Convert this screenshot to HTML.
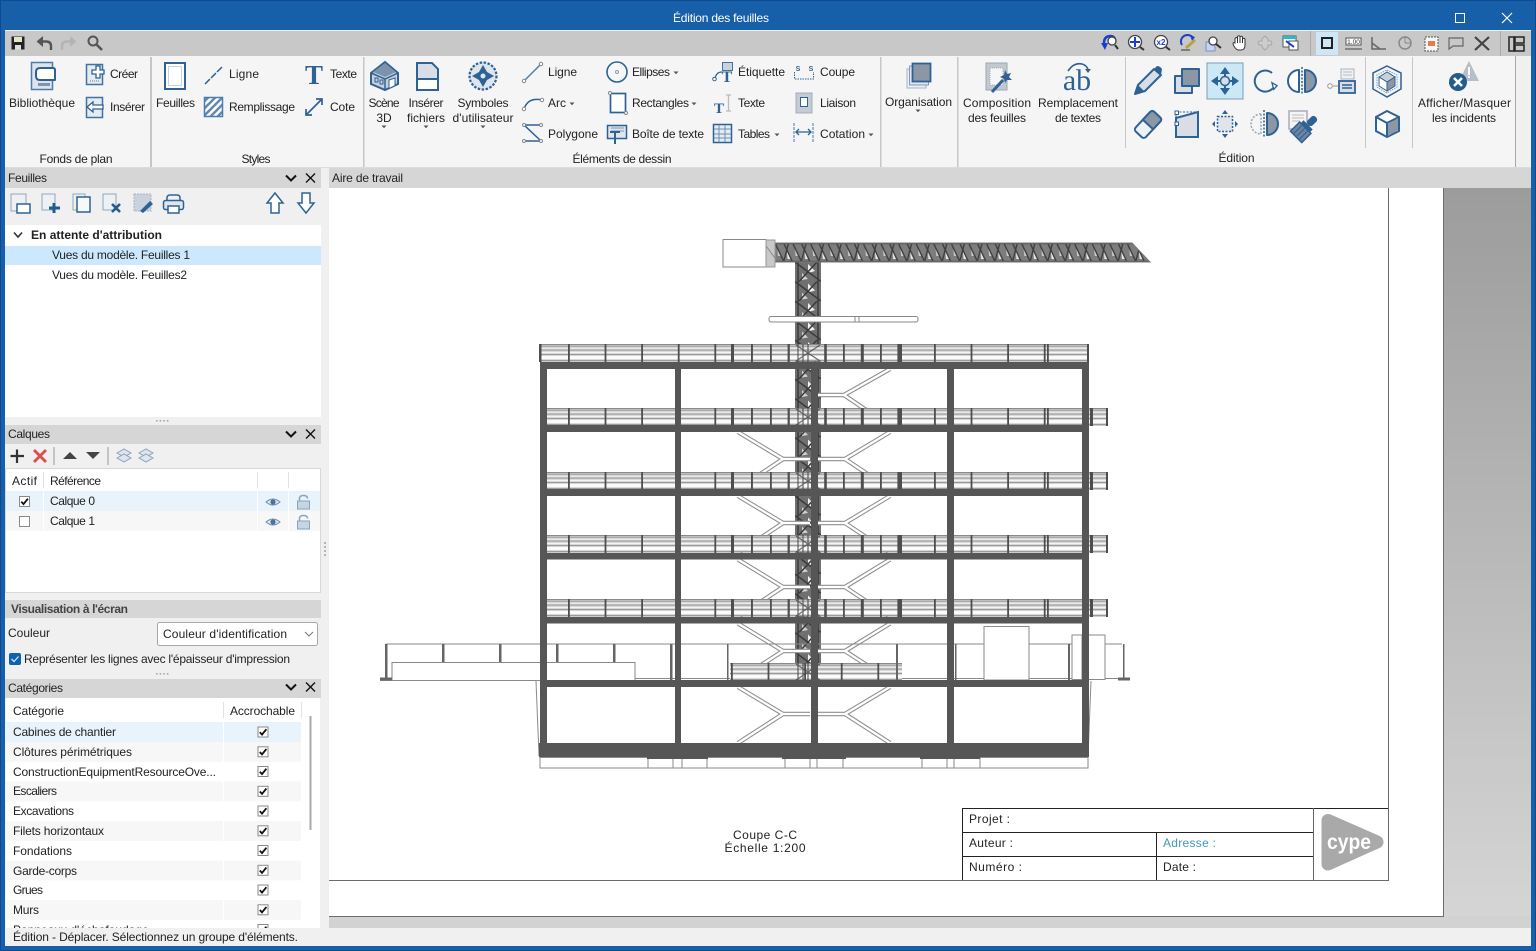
<!DOCTYPE html>
<html lang="fr"><head><meta charset="utf-8"><title>Édition des feuilles</title>
<style>
html,body{margin:0;padding:0;width:1536px;height:951px;overflow:hidden;background:#175fa9}
body>svg{position:absolute;left:0;top:0;display:block;filter:blur(.25px)}
text{font-family:"Liberation Sans",sans-serif;font-size:12px;fill:#222}
.m{text-anchor:middle}
.b{font-weight:bold}
.f{fill:#d9dee6;stroke:#2f6294;stroke-width:2;stroke-linejoin:round}
.g{fill:#8c97a6;stroke:#2f6294;stroke-width:2;stroke-linejoin:round}
.w{fill:#fff;stroke:#2f6294;stroke-width:2;stroke-linejoin:round}
</style></head><body>
<svg width="1536" height="951" viewBox="0 0 1536 951" xmlns="http://www.w3.org/2000/svg">
<defs>
<linearGradient id="bg" x1="0" y1="0" x2="0" y2="1"><stop offset="0" stop-color="#9c9c9c"/><stop offset="1" stop-color="#d6d6d6"/></linearGradient>
<pattern id="hatch" patternUnits="userSpaceOnUse" width="5" height="5" patternTransform="rotate(-45)"><rect width="5" height="5" fill="#fff"/><rect width="5" height="2.4" fill="#5d86ad"/></pattern>
<pattern id="tw" patternUnits="userSpaceOnUse" x="795" y="262" width="26" height="19.5">
<rect width="26" height="19.5" fill="#707070"/>
<path d="M13 2L20 9L13 11Z" fill="#f2f2f2"/><path d="M7 11L13 17L7 18Z" fill="#d0d0d0"/>
<path d="M0 0L26 19.5M22 0L4 19.5M3 0V19.5M23 0V19.5" stroke="#3a3a3a" stroke-width="1.500" fill="none"/>
</pattern>
<pattern id="jb" patternUnits="userSpaceOnUse" x="766" y="243" width="17.6" height="19">
<rect width="17.600" height="19" fill="#7d7d7d"/>
<path d="M3 5L8 16H4Z" fill="#e8e8e8"/><path d="M11 4L15 13H12Z" fill="#cfcfcf"/>
<path d="M0 0L9 19M9 0L18 19M0 19L5 0" stroke="#3d3d3d" stroke-width="1.400" fill="none"/>
<path d="M0 .6H18M0 18.400H18" stroke="#555" stroke-width="1.200"/>
</pattern>
<g id="cb"><rect x="-5" y="-5" width="10" height="10" fill="#fff" stroke="#8a8a8a" stroke-width="1"/><path d="M-3.2 0.2L-1 2.6L3.4-2.8" fill="none" stroke="#111" stroke-width="1.8"/></g>
<g id="chx"><path d="M-5-2.5L0 2.5L5-2.5" fill="none" stroke="#111" stroke-width="2"/><path d="M15-4.5L24 4.5M24-4.5L15 4.5" fill="none" stroke="#111" stroke-width="1.4"/></g>
<g id="arr"><path d="M-2.5-1.5H2.5L0 1.2Z" fill="#555"/></g>
<g id="grip"><rect x="0" y="0" width="1.6" height="1.6" fill="#aaa"/><rect x="3.6" y="0" width="1.6" height="1.6" fill="#aaa"/><rect x="7.2" y="0" width="1.6" height="1.6" fill="#aaa"/><rect x="10.8" y="0" width="1.6" height="1.6" fill="#aaa"/></g>
<g id="railing">
<rect x="0" y="0" width="568" height="17.500" fill="#d4d4d4"/>
<rect x="0" y="0" width="568" height="1.300" fill="#8a8a8a"/>
<rect x="0" y="2.200" width="568" height="1" fill="#a0a0a0"/>
<rect x="0" y="3.500" width="568" height="1.100" fill="#f4f4f4"/>
<rect x="0" y="5.600" width="568" height="1" fill="#9a9a9a"/>
<rect x="0" y="7.800" width="568" height="1.300" fill="#f4f4f4"/>
<rect x="0" y="10" width="568" height="1" fill="#9a9a9a"/>
<rect x="0" y="12" width="568" height="3.400" fill="#fafafa"/>
<rect x="0" y="15.800" width="568" height="1.700" fill="#9a9a9a"/>
</g>
<g id="posts" fill="#4e4e4e">
<rect x="0" width="1.800" height="18"/><rect x="36.6" width="1.800" height="18"/><rect x="73.2" width="1.800" height="18"/><rect x="109.8" width="1.800" height="18"/><rect x="146.4" width="1.800" height="18"/><rect x="183" width="1.800" height="18"/><rect x="219.6" width="1.800" height="18"/><rect x="256.2" width="1.800" height="18"/><rect x="292.8" width="1.800" height="18"/><rect x="329.4" width="1.800" height="18"/><rect x="366" width="1.800" height="18"/><rect x="402.6" width="1.800" height="18"/><rect x="439.2" width="1.800" height="18"/><rect x="475.8" width="1.800" height="18"/>
</g>
<g id="dense" fill="#4e4e4e"><rect x="731" width="3" height="18"/><rect x="751" width="1.800" height="18"/><rect x="770" width="1.800" height="18"/><rect x="788" width="1.800" height="18"/><rect x="825" width="1.800" height="18"/><rect x="843" width="1.800" height="18"/><rect x="862" width="1.800" height="18"/><rect x="880" width="1.800" height="18"/><rect x="899" width="3" height="18"/><path d="M796 1L820 17M820 1L796 17M798 0V18M803 0V18M808 0V18" stroke="#3f3f3f" stroke-width="1.300" fill="none" opacity=".75"/></g>
<g id="eye"><path d="M-7 0Q0-6 7 0Q0 6-7 0Z" fill="#dbe4ee" stroke="#6f8eae" stroke-width="1"/><circle r="2.6" fill="#4c7299"/></g>
<g id="lock"><rect x="-6" y="-2" width="12" height="8" fill="#c6d4e3" stroke="#8aa4bf"/><path d="M-4-2V-4.500Q-4-7.500 0-7.500Q4-7.500 4-4.500" fill="none" stroke="#8aa4bf" stroke-width="1.5"/></g>
<clipPath id="catclip"><rect x="6" y="698" width="314" height="230"/></clipPath>
</defs>

<!-- window frame -->
<rect width="1536" height="951" fill="#175fa9"/>
<rect x=".5" y=".5" width="1535" height="950" fill="none" stroke="#0e4a90"/>
<text x="721" y="22" class="m" style="fill:#fff" textLength="96">Édition des feuilles</text>
<rect x="1455.5" y="13.5" width="9" height="9" fill="none" stroke="#fff" stroke-width="1"/>
<path d="M1502 13L1512 23M1512 13L1502 23" stroke="#fff" stroke-width="1.2"/>

<!-- bars -->
<rect x="5" y="30" width="1526" height="916" fill="#f0f0f0"/>
<rect x="5" y="31" width="1526" height="25" fill="#c8c8c8"/>
<rect x="5" y="56" width="1510" height="111" fill="#f5f5f5"/>
<rect x="1515" y="56" width="1" height="111" fill="#a8a8a8"/>
<rect x="5" y="167" width="1526" height="1" fill="#dcdcdc"/>
<g fill="#c6c6c6"><rect x="150" y="57" width="2" height="110"/><rect x="363" y="57" width="1.5" height="110"/><rect x="880" y="57" width="1.5" height="110"/><rect x="957" y="57" width="1.5" height="110"/><rect x="1125" y="57" width="1" height="91"/><rect x="1365" y="57" width="1" height="91"/><rect x="1412" y="57" width="1" height="91"/></g>

<!-- QAT left -->
<rect x="11.500" y="36.500" width="13" height="13" fill="#222"/><rect x="14" y="37" width="8" height="5" fill="#e4e4c8"/><rect x="15" y="45" width="6" height="4.500" fill="#ddd"/>
<path d="M36.500 41.500L43 36V47Z" fill="#555"/><path d="M42 41.500H46Q51 41.500 51 46V50" fill="none" stroke="#555" stroke-width="2.400"/>
<path d="M76.500 41.500L70 36V47Z" fill="#b4b4b4"/><path d="M71 41.500H67Q62 41.500 62 46V50" fill="none" stroke="#b4b4b4" stroke-width="2.400"/>
<circle cx="93" cy="41" r="4.500" fill="none" stroke="#555" stroke-width="2"/><path d="M96 44L102 50" stroke="#555" stroke-width="2.500"/>

<!-- QAT right -->
<path d="M1104 43Q1104 36 1111 36Q1116 37 1115 43" fill="none" stroke="#1c3fc8" stroke-width="2.500"/><path d="M1101 43H1108L1105 50Z" fill="#1c3fc8"/><circle cx="1112" cy="41" r="4" fill="#fff" stroke="#444" stroke-width="1.300"/><path d="M1115 45L1118 49" stroke="#333" stroke-width="2"/>
<g><circle cx="1135" cy="42" r="6.500" fill="#fff" stroke="#444" stroke-width="1.300"/><path d="M1135 37V47M1130 42H1140" stroke="#1c3fc8" stroke-width="2"/><path d="M1140 47L1144 50" stroke="#333" stroke-width="2"/></g>
<g><circle cx="1161" cy="42" r="6.500" fill="#fff" stroke="#444" stroke-width="1.300"/><text x="1161" y="45" class="m" style="font-size:8px;fill:#1c3fc8;font-weight:bold">x2</text><path d="M1166 47L1170 50" stroke="#333" stroke-width="2"/></g>
<g><path d="M1182 45A6 6 0 1 1 1193 38" fill="none" stroke="#1c3fc8" stroke-width="2"/><path d="M1190 35L1195 37L1192 41Z" fill="#1c3fc8"/><path d="M1186 48L1195 40" stroke="#b8a33c" stroke-width="3"/><path d="M1181 50H1190" stroke="#333"/></g>
<g><rect x="1206" y="42" width="9" height="9" fill="#c9d2ee" stroke="#7b8fd0"/><circle cx="1213" cy="41" r="4" fill="#fff" stroke="#444" stroke-width="1.300"/><path d="M1216 44L1221 48" stroke="#333" stroke-width="2"/></g>
<path d="M1235 43V38.500Q1236.500 36.500 1237.500 38.500V43V36.500Q1239 35 1240 36.500V43V37Q1241.500 35.500 1242.500 37V43V39Q1244 37.500 1245 39V45Q1245 50 1241 50H1238Q1235 49 1233 44Q1233 42 1235 43Z" fill="#fff" stroke="#333" stroke-width="1"/>
<path d="M1265 36L1268 39V41H1271L1272 43L1271 45H1268V47L1265 50L1262 47V45H1259L1258 43L1259 41H1262V39Z" fill="#cdcdcd" stroke="#a8a8a8"/>
<g><rect x="1283" y="36" width="13" height="11" fill="#fff" stroke="#555"/><rect x="1283" y="36" width="13" height="3" fill="#2bb8c8"/><rect x="1289" y="41" width="9" height="9" fill="#fff" stroke="#555"/><path d="M1286 41L1294 47" stroke="#1c3fc8" stroke-width="2"/></g>
<rect x="1310" y="31" width="1" height="25" fill="#aaa"/>
<rect x="1316" y="32" width="22" height="23" fill="#cfe6f6"/>
<rect x="1322" y="38" width="10" height="10" fill="none" stroke="#222" stroke-width="2"/>
<g><rect x="1346" y="38" width="15" height="7" fill="#fff" stroke="#555"/><text x="1353.500" y="44" class="m" style="font-size:6.500px;fill:#333">1.00</text><path d="M1345 49H1362" stroke="#444"/></g>
<path d="M1372 37V49H1386M1372 43L1380 49" fill="none" stroke="#666" stroke-width="1.500"/>
<g><circle cx="1405" cy="43" r="6" fill="none" stroke="#888" stroke-width="1.500"/><path d="M1405 43H1411M1405 43V37" stroke="#888"/></g>
<g><rect x="1425" y="37" width="13" height="14" fill="#f5f5f5" stroke="#555" stroke-dasharray="2 1"/><rect x="1428" y="41" width="7" height="5" fill="#e67a4a"/></g>
<path d="M1449 38H1463V46H1453L1449 49Z" fill="none" stroke="#666" stroke-width="1.200"/>
<path d="M1475 37L1489 50M1489 37L1475 50" stroke="#444" stroke-width="2.200"/>
<rect x="1500" y="31" width="1" height="25" fill="#aaa"/>
<g fill="none" stroke="#222" stroke-width="1.500"><rect x="1509" y="37" width="5" height="14"/><rect x="1515" y="37" width="9" height="6"/><rect x="1515" y="45" width="9" height="6"/></g>

<!-- ribbon labels -->
<g>
<text x="9" y="107" textLength="66">Bibliothèque</text>
<text x="110" y="78" textLength="28">Créer</text>
<text x="110" y="111" textLength="35">Insérer</text>
<text x="76" y="163" class="m" textLength="73">Fonds de plan</text>
<text x="156" y="107" textLength="39">Feuilles</text>
<text x="229" y="78" textLength="30">Ligne</text>
<text x="229" y="111" textLength="66">Remplissage</text>
<text x="330" y="78" textLength="27">Texte</text>
<text x="330" y="111" textLength="25">Cote</text>
<text x="256" y="163" class="m" textLength="29">Styles</text>
<text x="384" y="107" class="m" textLength="31">Scène</text><text x="384" y="122" class="m">3D</text>
<text x="426" y="107" class="m" textLength="35">Insérer</text><text x="426" y="122" class="m" textLength="38">fichiers</text>
<text x="483" y="107" class="m" textLength="51">Symboles</text><text x="483" y="122" class="m" textLength="61">d'utilisateur</text>
<text x="548" y="76" textLength="29">Ligne</text>
<text x="548" y="107" textLength="18">Arc</text>
<text x="548" y="138" textLength="50">Polygone</text>
<text x="632" y="76" textLength="38">Ellipses</text>
<text x="632" y="107" textLength="57">Rectangles</text>
<text x="632" y="138" textLength="72">Boîte de texte</text>
<text x="738" y="76" textLength="47">Étiquette</text>
<text x="738" y="107" textLength="27">Texte</text>
<text x="738" y="138" textLength="32">Tables</text>
<text x="820" y="76" textLength="35">Coupe</text>
<text x="820" y="107" textLength="36">Liaison</text>
<text x="820" y="138" textLength="45">Cotation</text>
<text x="622" y="163" class="m" textLength="99">Éléments de dessin</text>
<text x="918.500" y="106" class="m" textLength="67">Organisation</text>
<text x="997" y="107" class="m" textLength="68">Composition</text><text x="997" y="122" class="m" textLength="58">des feuilles</text>
<text x="1078" y="107" class="m" textLength="80">Remplacement</text><text x="1078" y="122" class="m" textLength="46">de textes</text>
<text x="1236.500" y="162" class="m" textLength="36">Édition</text>
<text x="1464.500" y="107" class="m" textLength="93">Afficher/Masquer</text><text x="1464" y="122" class="m" textLength="64">les incidents</text>
</g>
<use href="#arr" x="384" y="127"/><use href="#arr" x="426" y="127"/><use href="#arr" x="483" y="127"/><use href="#arr" x="918" y="111"/>
<use href="#arr" x="676" y="73"/><use href="#arr" x="572" y="104"/><use href="#arr" x="694" y="104"/><use href="#arr" x="777" y="135"/><use href="#arr" x="871" y="135"/>

<!-- ribbon icons -->
<rect x="31.500" y="62.500" width="21" height="27" fill="#dfe4ea" stroke="#4a7db0" stroke-width="1.500"/>
<path d="M36 72Q36 68 40 68H53Q55 68 55 70V80H40Q36 80 36 76Z" class="w"/>
<rect x="38" y="83" width="12" height="3" fill="#7d96b0"/>
<g><rect x="86.500" y="64.500" width="16" height="20" fill="#e6ebf0" stroke="#3f73a6" stroke-width="1.500"/><path d="M96 66H100V70H104V74H100V78H96V74H92V70H96Z" fill="#fff" stroke="#2f6294" stroke-width="1.300"/><path d="M90 81H99" stroke="#777" stroke-dasharray="1 1"/></g>
<g><rect x="86.500" y="97.500" width="16" height="20" fill="#e6ebf0" stroke="#3f73a6" stroke-width="1.500"/><path d="M93 102V105H103V109H93V112L87 107Z" fill="#fff" stroke="#2f6294" stroke-width="1.300"/></g>
<rect x="165" y="63" width="20" height="26" fill="#fff" stroke="#2f6294" stroke-width="2"/><rect x="168.500" y="66.500" width="13" height="19" fill="none" stroke="#8ca6c0" stroke-dasharray="1 1"/>
<path d="M205 84L223 66" stroke="#2f6294" stroke-width="1.500" stroke-dasharray="7 1.500"/>
<rect x="204.500" y="97.500" width="18" height="19" fill="url(#hatch)" stroke="#4a7db0" stroke-width="1.500"/>
<text x="314" y="84" class="m" style="font-family:'Liberation Serif',serif;font-weight:bold;font-size:27px;fill:#2f6294">T</text>
<path d="M306 115L322 99M306 109V115H312M316 99H322V105" fill="none" stroke="#2f6294" stroke-width="1.700"/>

<path d="M371 73L385 62L398 73V84L385 90L371 84Z" fill="#c7d0db" stroke="#2f6294" stroke-width="2"/>
<path d="M371 73L385 79L398 73M385 79V90" fill="none" stroke="#2f6294" stroke-width="1.500"/><path d="M373 72L385 63L396 72L385 77Z" fill="#7d93ab"/><rect x="375" y="78" width="3" height="4" fill="none" stroke="#2f6294"/><rect x="380" y="80" width="3" height="4" fill="none" stroke="#2f6294"/><path d="M389 88V80L395 78V85" fill="#fff" stroke="#2f6294"/>
<path d="M417 63H432L438 69V90H417Z" fill="#d9dee6" stroke="#2f6294" stroke-width="2"/><rect x="417" y="79" width="21" height="11" fill="#fff" stroke="#2f6294" stroke-width="2"/>
<circle cx="483" cy="76" r="13.500" fill="#dfe5ec" stroke="#2f6294" stroke-width="2.200" stroke-dasharray="2.500 1.500"/><path d="M483 65L487 72L494 76L487 80L483 87L479 80L472 76L479 72Z" fill="#2f6294"/><circle cx="483" cy="76" r="2.500" fill="#dfe5ec"/>

<path d="M524 81L541 64" stroke="#4f7ea8" stroke-width="1.500"/><circle cx="524" cy="81" r="1.700" fill="#fff" stroke="#888"/><circle cx="541" cy="64" r="1.700" fill="#fff" stroke="#888"/>
<path d="M524 109Q528 97 542 100" fill="none" stroke="#2f6294" stroke-width="1.500"/><circle cx="524" cy="109" r="1.700" fill="#fff" stroke="#888"/><circle cx="542" cy="100" r="1.700" fill="#fff" stroke="#888"/>
<path d="M524 125H541M524 125L541 141H524" fill="none" stroke="#2f6294" stroke-width="1.500"/><g fill="#fff" stroke="#888"><circle cx="524" cy="125" r="1.500"/><circle cx="541" cy="125" r="1.500"/><circle cx="524" cy="141" r="1.500"/><circle cx="541" cy="141" r="1.500"/></g>
<circle cx="617" cy="72" r="10" fill="#f4f6f8" stroke="#2f6294" stroke-width="1.600"/><circle cx="617" cy="72" r="1.500" fill="none" stroke="#999"/>
<rect x="610.500" y="93.500" width="15" height="19" fill="#fff" stroke="#2f6294" stroke-width="1.700"/><circle cx="610" cy="93" r="1.500" fill="#fff" stroke="#888"/><circle cx="626" cy="113" r="1.500" fill="#fff" stroke="#888"/>
<rect x="607.500" y="125.500" width="19" height="13" fill="#dfe5ec" stroke="#2f6294" stroke-width="1.500"/><path d="M611 128H624M611 131H624" stroke="#7d96b0"/><path d="M610 132H620M615 132V144" stroke="#2f6294" stroke-width="2"/>
<rect x="722.500" y="62.500" width="10" height="8" fill="#c9d3de" stroke="#3f73a6"/><text x="727" y="82" class="m b" style="font-family:'Liberation Serif',serif;font-size:16px;fill:#2f6294">T</text><path d="M715 79Q716 72 722 72" fill="none" stroke="#2f6294" stroke-width="1.200"/><circle cx="714.500" cy="79" r="1.800" fill="#fff" stroke="#2f6294"/>
<text x="719" y="113" class="m b" style="font-family:'Liberation Serif',serif;font-size:15px;fill:#2f6294">T</text><path d="M726 95H731M728.500 95V111M726 111H731" stroke="#bbb" stroke-width="1.300" fill="none"/>
<rect x="713.500" y="124.500" width="18" height="18" fill="#e6ebf0" stroke="#2f6294" stroke-width="1.500"/><path d="M714 129H731M714 134H731M714 138H731M719 125V142M725 125V142" stroke="#6e90b2"/>
<text x="798" y="71" class="m" style="font-size:7px;fill:#2f6294;font-weight:bold">S</text><text x="811" y="71" class="m" style="font-size:7px;fill:#2f6294;font-weight:bold">S</text><path d="M794.500 72V79H813.500V72" fill="none" stroke="#2f6294" stroke-dasharray="1.500 1"/>
<rect x="796" y="93" width="16" height="20" fill="#c3cbd4" stroke="#aab"/><rect x="800.500" y="97.500" width="7" height="9" fill="#fff" stroke="#2f6294"/>
<path d="M794 123V142M813 123V142" stroke="#4a7db0" stroke-dasharray="3 1"/><path d="M796 132H811M799 129L796 132L799 135M808 129L811 132L808 135" fill="none" stroke="#2f6294" stroke-width="1.300"/>

<g><rect x="907" y="69" width="19" height="19" fill="#eef1f4" stroke="#9eb5cb"/><rect x="909.500" y="66" width="19" height="19" fill="#dfe5ec" stroke="#7e9cba"/><rect x="912.500" y="63.500" width="18" height="18" fill="#8c97a6" stroke="#2f6294" stroke-width="1.800"/></g>
<g><rect x="986" y="63" width="21" height="27" fill="#c2c8cf" stroke="#9ca6b1"/><rect x="990" y="68" width="13" height="17" fill="#f5f6f8" stroke="#aaa" stroke-dasharray="1 1"/><path d="M992 92L1003 80" stroke="#2f6294" stroke-width="3"/><path d="M1005 70L1007 74L1011 73L1009 77L1012 80L1007 80L1005 83L1004 79L1000 77L1004 75Z" fill="#2f6294"/></g>
<text x="1077" y="90" class="m" style="font-family:'Liberation Serif',serif;font-size:30px;fill:#2f6294">ab</text>
<path d="M1068 71Q1074 62 1082 64Q1086 65 1088 69" fill="none" stroke="#2f6294" stroke-width="1.600"/><path d="M1085 69H1091L1088 73Z" fill="#2f6294"/>

<!-- edition grid -->
<path d="M1135 94L1138 85L1154 69L1161 75L1145 91Z" fill="#d9dee6" stroke="#2f6294" stroke-width="2" stroke-linejoin="round"/><path d="M1154 69L1157 66Q1160 66 1162 69L1161 75Z" fill="#2f6294"/><path d="M1135 94L1138 85L1144 91Z" fill="#2f6294"/>
<rect x="1175" y="76" width="17" height="17" class="f"/><rect x="1182" y="69" width="17" height="17" class="g"/>
<rect x="1207" y="63" width="36" height="36" fill="#cbe8f6" stroke="#8fa9be" stroke-width="1.200"/>
<g fill="#2f6294"><path d="M1225 67L1230 74H1220Z"/><path d="M1225 95L1230 88H1220Z"/><path d="M1211 81L1218 76V86Z"/><path d="M1239 81L1232 76V86Z"/><rect x="1224" y="72" width="2" height="18"/><rect x="1216" y="80" width="18" height="2"/></g><circle cx="1225" cy="81" r="4.500" fill="#d9dee6" stroke="#2f6294" stroke-width="1.500"/>
<path d="M1275 85A10.500 10.500 0 1 1 1272 73" fill="none" stroke="#2f6294" stroke-width="2"/><path d="M1271 84H1277L1276 89Z" fill="#fff" stroke="#2f6294" stroke-width="1.300" transform="rotate(30 1274 85)"/>
<path d="M1299 70A11 11 0 0 0 1299 92Z" class="w"/><path d="M1305 70A11 11 0 0 1 1305 92Z" class="g"/><path d="M1302 67V95" stroke="#2f6294" stroke-width="1.500" stroke-dasharray="2 1.500"/>
<rect x="1341" y="69" width="13" height="10" fill="#eef1f4" stroke="#aab5c0"/><path d="M1343 72H1352M1343 75H1352" stroke="#bbb"/><rect x="1339" y="81" width="16" height="12" fill="#d9dee6" stroke="#2f6294" stroke-width="1.800"/><path d="M1342 85H1352M1342 88H1352" stroke="#2f6294" stroke-width="1.400"/><circle cx="1330" cy="86" r="2.300" fill="#fff" stroke="#999"/><path d="M1333 86H1338" stroke="#999"/>
<g transform="rotate(-47 1148 124.500)"><rect x="1134.500" y="117.500" width="27" height="14" rx="3" fill="#eef1f4" stroke="#2f6294" stroke-width="2"/><path d="M1148 117.500H1158.500Q1161.500 117.500 1161.500 120.500V128.500Q1161.500 131.500 1158.500 131.500H1148Z" class="g"/></g>
<path d="M1176 118L1198 112V137H1176Z" fill="#d9dee6" stroke="#2f6294" stroke-width="2"/><path d="M1176 112H1197" stroke="#2f6294" stroke-dasharray="2 1.500"/><path d="M1176 112V120" stroke="#2f6294" stroke-dasharray="2 1"/><rect x="1175" y="111" width="3.500" height="3.500" fill="#fff" stroke="#2f6294"/><rect x="1175" y="122" width="3.500" height="3.500" fill="#fff" stroke="#2f6294"/>
<rect x="1217.500" y="116.500" width="15" height="15" fill="#dfe5ec" stroke="#2f6294" stroke-width="1.500" stroke-dasharray="2 1.500"/><g fill="#2f6294"><path d="M1225 110L1228 114H1222Z"/><path d="M1225 138L1228 134H1222Z"/><path d="M1212 124L1215 121V127Z"/><path d="M1238 124L1235 121V127Z"/></g>
<path d="M1261 114A10 10 0 0 0 1261 134Z" fill="none" stroke="#9aa5b1" stroke-width="1.500" stroke-dasharray="2 1.500"/><path d="M1267 113A11 11 0 0 1 1267 135Z" class="g"/><path d="M1264 110V138" stroke="#2f6294" stroke-width="1.500" stroke-dasharray="2 1.500"/>
<rect x="1289" y="111" width="18" height="18" fill="#f4f4f4" stroke="#aab" stroke-width="1.500"/><path d="M1292 115H1304M1292 118H1304M1292 121H1300" stroke="#bbb"/>
<g transform="translate(1306 127) rotate(-45)"><rect x="-14" y="-8" width="13" height="16" fill="#6d84a0" stroke="#2f6294" stroke-width="1.500"/><path d="M-13-4H-2M-13 0H-2M-13 4H-2" stroke="#2f6294"/><rect x="-1" y="-6.500" width="4" height="13" fill="#2f6294"/><rect x="3" y="-3.500" width="11" height="7" rx="3" fill="#2f6294"/></g>
<path d="M1387 66L1401 73V89L1387 97L1373 89V73Z" fill="none" stroke="#2f6294" stroke-width="1.500"/><path d="M1387 70L1397 75V87L1387 93L1377 87V75Z" fill="#fff" stroke="#7d9ab8" stroke-dasharray="1.500 1"/><path d="M1379 77L1387 72L1395 77L1387 82Z" fill="#c9d0d9" stroke="#2f6294"/><path d="M1379 77V86L1387 91V82Z" fill="#fff" stroke="#2f6294"/><path d="M1395 77V86L1387 91V82Z" fill="#8c97a6" stroke="#2f6294"/>
<path d="M1387 111L1399 117V131L1387 137L1376 131V117Z" fill="#fff" stroke="#2f6294" stroke-width="2"/><path d="M1376 117L1387 123L1399 117M1387 123V137" fill="none" stroke="#2f6294" stroke-width="2"/><path d="M1388 124L1398 118V130L1388 136Z" fill="#8c97a6"/>
<path d="M1469 61L1479 81H1459Z" fill="#b6bec8"/><rect x="1468" y="67" width="2" height="8" fill="#fff"/><rect x="1468" y="76" width="2" height="2" fill="#fff"/>
<circle cx="1458" cy="82" r="9" fill="#245a90"/><path d="M1454 78L1462 86M1462 78L1454 86" stroke="#fff" stroke-width="2.600"/>

<!-- feuilles panel -->
<rect x="5" y="168" width="316" height="20" fill="#d6d6d6"/>
<rect x="329" y="168" width="1202" height="20" fill="#d6d6d6"/>
<text x="8" y="182" textLength="39">Feuilles</text><text x="332" y="182" textLength="71">Aire de travail</text>
<use href="#chx" x="291" y="178"/>
<g>
<rect x="11" y="194" width="15" height="17" fill="#eef1f4" stroke="#8fa7c0"/><path d="M17 204H30V213H17Z" fill="#fff" stroke="#2f6294" stroke-width="1.500"/>
<rect x="42" y="194" width="13" height="16" fill="#eef1f4" stroke="#8fa7c0"/><path d="M54 203V213M49 208H60" stroke="#245a90" stroke-width="3"/>
<rect x="73" y="194" width="12" height="16" fill="#eef1f4" stroke="#8fa7c0"/><rect x="77" y="197" width="13" height="15" fill="#f7f8fa" stroke="#2f6294" stroke-width="1.500"/>
<rect x="103" y="194" width="13" height="16" fill="#eef1f4" stroke="#8fa7c0"/><path d="M112 204L120 212M120 204L112 212" stroke="#245a90" stroke-width="2.600"/>
<rect x="134" y="194" width="17" height="17" fill="#c9d3de" stroke="#a7b3bf" stroke-dasharray="2 1"/><path d="M140 211L150 201L153 204L143 213Z" fill="#2f6294"/>
<path d="M167 204V198Q167 195 170 195H177Q180 195 180 198V204" fill="none" stroke="#2f6294" stroke-width="1.500"/><rect x="163.500" y="200.500" width="20" height="9" rx="2" fill="#dfe5ec" stroke="#2f6294" stroke-width="1.500"/><rect x="168" y="206" width="11" height="7" fill="#fff" stroke="#2f6294" stroke-width="1.500"/>
<path d="M275 193L283 203H279V213H271V203H267Z" fill="#fff" stroke="#2f6294" stroke-width="1.500"/>
<path d="M306 213L314 203H310V193H302V203H298Z" fill="#fff" stroke="#2f6294" stroke-width="1.500"/>
</g>
<rect x="5" y="225" width="316" height="192" fill="#fff"/>
<rect x="5" y="246" width="316" height="19" fill="#cce8ff"/>
<path d="M14 232.500L18 237L22 232.500" fill="none" stroke="#333" stroke-width="1.600"/>
<text x="31" y="239" class="b" textLength="131">En attente d'attribution</text>
<text x="52" y="259" textLength="138">Vues du modèle. Feuilles 1</text>
<text x="52" y="279" textLength="135">Vues du modèle. Feuilles2</text>
<use href="#grip" x="156" y="420"/>

<!-- calques -->
<rect x="5" y="425" width="316" height="19" fill="#d6d6d6"/>
<text x="8" y="438" textLength="42">Calques</text><use href="#chx" x="291" y="434"/>
<path d="M17 449.500V463M10.500 456H24" stroke="#333" stroke-width="2.200"/>
<path d="M34 450L46 462M46 450L34 462" stroke="#d8534f" stroke-width="3"/>
<rect x="53.500" y="447" width="1" height="18" fill="#999"/>
<path d="M63 459L70 452L77 459Z" fill="#444"/><path d="M86 452L93 459L100 452Z" fill="#444"/>
<rect x="107.500" y="447" width="1" height="18" fill="#999"/>
<g fill="#dfe5ec" stroke="#8aa4bf"><path d="M117 453L124 449L131 453L124 457Z"/><path d="M117 458L124 454L131 458L124 462Z"/><path d="M139 453L146 449L153 453L146 457Z"/><path d="M139 458L146 454L153 458L146 462Z"/></g>
<rect x="5.500" y="468.500" width="315" height="124" fill="#fff" stroke="#d8d8d8"/>
<path d="M43.500 472V488M257.500 472V488M288.500 472V488" stroke="#e2e2e2"/>
<text x="12" y="485" textLength="25">Actif</text><text x="50" y="485" textLength="51">Référence</text>
<rect x="6" y="491" width="314" height="20" fill="#e8f3fc"/><rect x="6" y="511" width="314" height="20" fill="#f7f7f7"/>
<path d="M43.500 491V531M257.500 491V531M288.500 491V531" stroke="#fff"/>
<use href="#cb" x="24.500" y="501.500"/>
<rect x="19.500" y="516.500" width="10" height="10" fill="#fff" stroke="#8a8a8a"/>
<text x="50" y="505" textLength="45">Calque 0</text><text x="50" y="525" textLength="45">Calque 1</text>
<use href="#eye" x="273" y="502"/><use href="#eye" x="273" y="522"/>
<use href="#lock" x="303.500" y="503"/><use href="#lock" x="303.500" y="523"/>
<g fill="#b5b5b5"><rect x="324" y="542" width="2" height="2"/><rect x="324" y="546" width="2" height="2"/><rect x="324" y="550" width="2" height="2"/><rect x="324" y="554" width="2" height="2"/></g>

<rect x="5" y="600" width="316" height="18" fill="#d6d6d6"/>
<text x="11" y="613" class="b" style="fill:#444" textLength="117">Visualisation à l'écran</text>
<text x="8" y="637" textLength="42">Couleur</text>
<rect x="157.500" y="622.500" width="160" height="23" rx="2" fill="#fff" stroke="#a9a9a9"/>
<text x="163" y="638" textLength="124">Couleur d'identification</text>
<path d="M305 632L309 636L313 632" fill="none" stroke="#777"/>
<rect x="9" y="653" width="12" height="12" rx="2" fill="#0f62b0"/><path d="M11.500 659L14 661.500L18.500 656.500" fill="none" stroke="#cfe3f6" stroke-width="1.300"/>
<text x="24" y="663" textLength="266">Représenter les lignes avec l'épaisseur d'impression</text>
<use href="#grip" x="156" y="673"/>

<!-- categories -->
<rect x="5" y="679" width="316" height="19" fill="#d6d6d6"/>
<text x="8" y="692" textLength="55">Catégories</text><use href="#chx" x="291" y="687"/>
<rect x="6" y="698" width="314" height="230" fill="#fff"/>
<path d="M223.500 702V718M301.500 702V718" stroke="#e2e2e2"/>
<text x="13" y="715" textLength="51">Catégorie</text><text x="230" y="715" textLength="65">Accrochable</text>
<g clip-path="url(#catclip)">
<rect x="6" y="722" width="295" height="20" fill="#e8f3fc"/>
<rect x="6" y="742" width="295" height="19.800" fill="#f7f7f7"/>
<rect x="6" y="781.500" width="295" height="19.800" fill="#f7f7f7"/>
<rect x="6" y="821" width="295" height="19.800" fill="#f7f7f7"/>
<rect x="6" y="860.500" width="295" height="19.800" fill="#f7f7f7"/>
<rect x="6" y="900" width="295" height="19.800" fill="#f7f7f7"/>
<path d="M223.500 722V928" stroke="#fff"/>
<text x="13" y="736" textLength="103">Cabines de chantier</text>
<text x="13" y="756" textLength="119">Clôtures périmétriques</text>
<text x="13" y="776" textLength="203">ConstructionEquipmentResourceOve...</text>
<text x="13" y="795" textLength="44">Escaliers</text>
<text x="13" y="815" textLength="61">Excavations</text>
<text x="13" y="835" textLength="91">Filets horizontaux</text>
<text x="13" y="855" textLength="59">Fondations</text>
<text x="13" y="875" textLength="64">Garde-corps</text>
<text x="13" y="894" textLength="30">Grues</text>
<text x="13" y="914" textLength="26">Murs</text>
<text x="13" y="934">Panneaux d'échafaudage</text>
<use href="#cb" x="263" y="732"/><use href="#cb" x="263" y="751.800"/><use href="#cb" x="263" y="771.500"/><use href="#cb" x="263" y="791.300"/><use href="#cb" x="263" y="811"/><use href="#cb" x="263" y="830.800"/><use href="#cb" x="263" y="850.500"/><use href="#cb" x="263" y="870.300"/><use href="#cb" x="263" y="890"/><use href="#cb" x="263" y="909.800"/><use href="#cb" x="263" y="929.500"/>
</g>
<rect x="309.500" y="716" width="2" height="114" fill="#a8a8a8"/>
<rect x="5" y="928" width="1526" height="18" fill="#f0f0f0"/>
<text x="13" y="941" textLength="285">Édition - Déplacer. Sélectionnez un groupe d'éléments.</text>

<!-- canvas -->
<rect x="329" y="188" width="1202" height="740" fill="url(#bg)"/>
<rect x="329" y="916" width="1202" height="12" fill="#d2d2d2"/>
<rect x="329" y="188" width="1114" height="728" fill="#fff"/>
<path d="M1443.500 188V916.500H329" fill="none" stroke="#6e6e6e" stroke-width="1"/>
<path d="M1388.500 188V880.500H329" fill="none" stroke="#6a6a6a" stroke-width="1"/>

<!-- drawing -->
<g style="filter:blur(.35px)">
<!-- crane -->
<rect x="795" y="262" width="26" height="418" fill="url(#tw)"/>
<path d="M766 243H1132L1150 262H766Z" fill="url(#jb)" stroke="#777"/>
<rect x="723" y="239.500" width="43" height="27.500" fill="#fff" stroke="#888" stroke-width="1"/>
<rect x="766" y="240" width="9" height="27" fill="#c8c8c8" stroke="#999"/><path d="M766 246L775 258" stroke="#888"/>
<rect x="769" y="316.500" width="149" height="5.500" rx="2" fill="#fff" stroke="#888"/><path d="M855 316V322M859 316V322" stroke="#888"/>

<!-- stairs (under the railings) -->
<g fill="none" stroke="#8f8f8f" stroke-width="4.500" stroke-linejoin="miter">
<path d="M890 369L844 395H818M844 395L888 425"/>
<path d="M738 432L783 459H810M818 459H845L890 432M783 459L738 489M845 459L890 489"/>
<path d="M738 496L783 523H810M818 523H845L890 496M783 523L738 553M845 523L890 553"/>
<path d="M738 559.500L783 587H810M818 587H845L890 559.500M783 587L738 617M845 587L890 617"/>
<path d="M738 623.500L783 651H810M818 651H845L890 623.500M783 651L738 680M845 651L890 680"/>
<path d="M738 687L783 714H810M818 714H845L890 687M783 714L738 743M845 714L890 743"/>
</g>
<g fill="none" stroke="#fff" stroke-width="2.300" stroke-linejoin="miter">
<path d="M890 369L844 395H818M844 395L888 425"/>
<path d="M738 432L783 459H810M818 459H845L890 432M783 459L738 489M845 459L890 489"/>
<path d="M738 496L783 523H810M818 523H845L890 496M783 523L738 553M845 523L890 553"/>
<path d="M738 559.500L783 587H810M818 587H845L890 559.500M783 587L738 617M845 587L890 617"/>
<path d="M738 623.500L783 651H810M818 651H845L890 623.500M783 651L738 680M845 651L890 680"/>
<path d="M738 687L783 714H810M818 714H845L890 687M783 714L738 743M845 714L890 743"/>
</g>

<!-- railings -->
<svg x="540" y="344" width="549" height="18" overflow="hidden"><use href="#railing"/><use href="#posts" x="28"/></svg>
<svg x="547" y="408" width="561" height="18"><use href="#railing"/><use href="#posts" x="21"/></svg>
<svg x="547" y="472" width="561" height="18"><use href="#railing"/><use href="#posts" x="21"/></svg>
<svg x="547" y="535" width="561" height="18"><use href="#railing"/><use href="#posts" x="21"/></svg>
<svg x="547" y="599" width="561" height="18"><use href="#railing"/><use href="#posts" x="21"/></svg>
<use href="#dense" y="344"/><use href="#dense" y="408"/><use href="#dense" y="472"/><use href="#dense" y="535"/><use href="#dense" y="599"/>
<g fill="#4e4e4e"><rect x="539" y="344" width="2.500" height="18"/><rect x="1087" y="344" width="2" height="18"/><rect x="1047" y="344" width="1.800" height="18"/><rect x="1047" y="408" width="1.800" height="18"/><rect x="1047" y="472" width="1.800" height="18"/><rect x="1047" y="535" width="1.800" height="18"/><rect x="1047" y="599" width="1.800" height="18"/><rect x="1106" y="408" width="2" height="18"/><rect x="1106" y="472" width="2" height="18"/><rect x="1106" y="535" width="2" height="18"/><rect x="1106" y="599" width="2" height="18"/><rect x="1090" y="408" width="3" height="18"/><rect x="1090" y="472" width="3" height="18"/><rect x="1090" y="535" width="3" height="18"/><rect x="1090" y="599" width="3" height="18"/></g>
<svg x="730" y="663" width="172" height="17.500"><use href="#railing"/><use href="#posts" x="1"/><path d="M66 1L90 17M90 1L66 17M68 0V18M73 0V18M78 0V18" stroke="#3f3f3f" stroke-width="1.300" fill="none" opacity=".75"/></svg>

<!-- ground level outline -->
<g fill="none" stroke="#8a8a8a" stroke-width="1">
<path d="M386 644H1122"/>
<rect x="392" y="662.500" width="243" height="18"/>
<path d="M380 680.500H540M635 678.500H730M902 678.500H1072M1105 678.500H1118"/>
<path d="M536 681L539 756M1091 681L1088 757"/>
<rect x="984" y="626.500" width="45" height="53.500" fill="#fff"/>
<rect x="1072" y="635" width="33" height="44.500" fill="#fff"/>
<path d="M1082 635V680"/>
<rect x="540" y="757.500" width="548" height="10.500"/>
<path d="M648 757V768M673 757V768M682 757V768M707 757V768M785 757V768M810 757V768M817 757V768M843 757V768M922 757V768M947 757V768M954 757V768M980 757V768"/>
</g>
<g fill="#666"><rect x="385" y="644" width="2.500" height="36"/><rect x="442" y="644" width="2.500" height="18"/><rect x="499" y="644" width="2.500" height="18"/><rect x="556" y="644" width="2.500" height="18"/><rect x="613" y="644" width="2.500" height="18"/><rect x="670" y="644" width="2.500" height="36"/><rect x="727" y="644" width="1.500" height="36"/><rect x="896" y="644" width="2" height="36"/><rect x="955" y="644" width="1.500" height="36"/><rect x="1068" y="644" width="2" height="36"/><rect x="1123" y="644" width="1.500" height="36"/><rect x="380" y="677.500" width="12" height="3"/><rect x="1118" y="677.500" width="12" height="3"/></g>

<!-- structure -->
<g fill="#565656">
<rect x="540" y="362" width="549" height="7"/><rect x="540" y="425" width="549" height="7"/><rect x="540" y="489" width="549" height="7"/><rect x="540" y="553" width="549" height="6.500"/><rect x="540" y="617" width="549" height="6.500"/><rect x="540" y="680" width="549" height="7"/>
<rect x="539" y="743" width="550" height="14"/>
<rect x="647" y="750" width="61" height="9"/><rect x="782" y="750" width="64" height="9"/><rect x="920" y="750" width="60" height="9"/>
<rect x="540" y="362" width="7" height="385"/><rect x="675" y="362" width="6" height="385"/><rect x="811" y="369" width="7" height="378"/><rect x="947" y="362" width="7" height="385"/><rect x="1082" y="362" width="7" height="385"/>
</g>
</g>

<!-- title block -->
<g fill="none" stroke="#333" stroke-width="1">
<path d="M962.500 808.500H1388M962.500 832.500H1313M962.500 856.500H1313M962.500 808V880M1156.500 832V880" stroke="#222"/>
<path d="M1313.500 808V880" stroke="#666"/>
</g>
<text x="969" y="823" textLength="41">Projet :</text>
<text x="969" y="847" textLength="44">Auteur :</text>
<text x="1163" y="847" style="fill:#3f97bb" textLength="53">Adresse :</text>
<text x="969" y="871" textLength="53">Numéro :</text>
<text x="1163" y="871" textLength="33">Date :</text>
<text x="765" y="839" class="m" textLength="64">Coupe C-C</text>
<text x="765" y="852" class="m" textLength="81">Échelle  1:200</text>
<path d="M1328 820.500L1377 842L1328 864Z" fill="#a9a9a9" stroke="#a9a9a9" stroke-width="13" stroke-linejoin="round"/>
<text x="1349" y="849" class="m b" style="fill:#fff;font-size:21px" textLength="44" lengthAdjust="spacingAndGlyphs">cype</text>
</svg>
</body></html>
